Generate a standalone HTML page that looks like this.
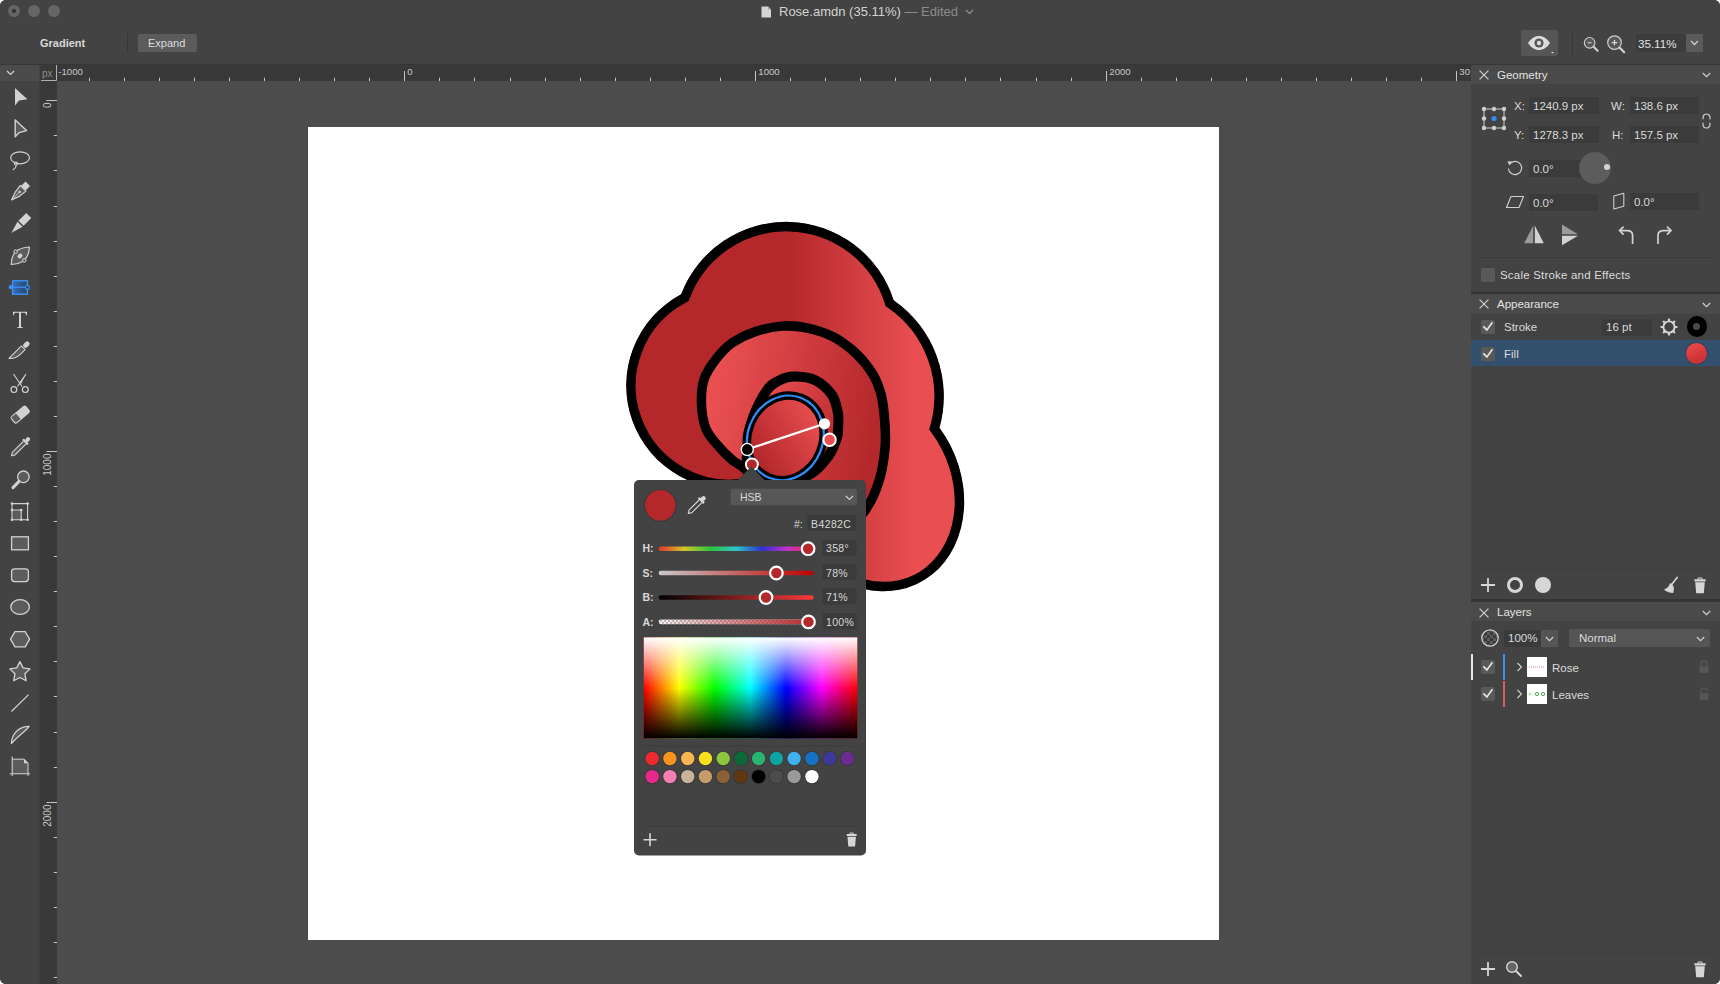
<!DOCTYPE html>
<html><head><meta charset="utf-8">
<style>
*{margin:0;padding:0;box-sizing:border-box}
html,body{width:1720px;height:984px;overflow:hidden;background:#fff}
body{font-family:"Liberation Sans",sans-serif;color:#dcdcdc;position:relative}
.a{position:absolute}
#win{position:absolute;left:0;top:0;width:1720px;height:984px;background:#434343;border-radius:6px;overflow:hidden;box-shadow:inset 0 0 0 0.6px rgba(0,0,0,0.35)}
#top{left:0;top:0;width:1720px;height:64px;background:#434343}
#topline{left:0;top:64px;width:1720px;height:1px;background:#363636;z-index:5}
.tl{width:12px;height:12px;border-radius:50%;background:#656565;top:5px}
#canvas{left:57px;top:81px;width:1414px;height:903px;background:#4c4c4c}
#hruler{left:40px;top:65px;width:1431px;height:16px;background:#393939}
#vruler{left:40px;top:81px;width:17px;height:903px;background:#393939}
#ltool{left:0;top:65px;width:40px;height:919px;background:#434343;border-right:1px solid #3b3b3b}
#ltoolhead{left:0;top:65px;width:40px;height:16px;background:#4b4b4b}
#artboard{left:308px;top:127px;width:911px;height:813px;background:#fff}
#panel{left:1471px;top:65px;width:249px;height:919px;background:#434343}
.t11{font-size:11px;line-height:13px;white-space:nowrap}
.cb{width:14px;height:14px;background:#595959;border-radius:2px}
.hdr{left:1471px;width:249px;height:19px;background:#4a4a4a}
.ht{font-size:11.5px;line-height:13px;color:#e2e2e2;white-space:nowrap}
.pt{font-size:11.5px;line-height:13px;color:#dadada;white-space:nowrap}
.fld{background:#3b3b3b}
</style></head><body>
<div id="win">
<div class="a" id="top"></div>
<div class="a" id="topline"></div>

<div class="a tl" style="left:8px"><div class="a" style="left:4px;top:4px;width:4px;height:4px;border-radius:50%;background:#2e2e2e"></div></div>
<div class="a tl" style="left:28px"></div>
<div class="a tl" style="left:48px"></div>
<svg class="a" style="left:760px;top:6px" width="13" height="12" viewBox="0 0 13 12"><path d="M1.5 0.5h6.5l3 3v8h-9.5z" fill="#d4d4d4"/><path d="M8 0.5v3h3" fill="#a8a8a8"/></svg>
<div class="a" style="left:779px;top:4px;font-size:13px;line-height:16px;color:#d2d2d2;white-space:nowrap">Rose.amdn (35.11%) <span style="color:#8c8c8c">— Edited</span></div>
<svg class="a" style="left:965px;top:9px" width="9" height="6" viewBox="0 0 9 6"><path d="M1 1l3.5 3.5L8 1" stroke="#8c8c8c" stroke-width="1.3" fill="none"/></svg>
<div class="a" style="left:40px;top:37px;font-size:11px;line-height:13px;font-weight:bold;color:#d8d8d8">Gradient</div>
<div class="a" style="left:127px;top:33px;width:1px;height:20px;background:#383838"></div>
<div class="a" style="left:138px;top:34px;width:59px;height:18px;background:#5b5b5b;border-radius:2px"></div>
<div class="a" style="left:148px;top:37px;font-size:11px;line-height:13px;color:#dcdcdc">Expand</div>
<div class="a" style="left:1521px;top:30px;width:37px;height:26px;background:#565656;border-radius:2px"></div>
<svg class="a" style="left:1526px;top:34px" width="30" height="22" viewBox="0 0 30 22"><path d="M2 9C6 3 10 2 13 2S20 3 24 9C20 15 16 16 13 16S6 15 2 9z" fill="#dcdcdc"/><circle cx="13" cy="9" r="4.6" fill="#565656"/><circle cx="13" cy="9" r="2.2" fill="#dcdcdc"/><path d="M25 18h3l-1.5 1.6z" fill="#dcdcdc"/></svg>
<div class="a" style="left:1572px;top:33px;width:1px;height:22px;background:#383838"></div>
<svg class="a" style="left:1580px;top:33px" width="22" height="22" viewBox="1580 33 22 22"><circle cx="1589.6" cy="42.8" r="5.3" fill="#595959" stroke="#cfcfcf" stroke-width="1.1"/><path d="M1587.6 42.8h4" stroke="#d8d8d8" stroke-width="1.1"/><path d="M1593.6 46.8l4 4" stroke="#cfcfcf" stroke-width="2.1" stroke-linecap="round"/></svg>
<svg class="a" style="left:1603px;top:31px" width="26" height="26" viewBox="1603 31 26 26"><circle cx="1614.5" cy="42.6" r="6.8" fill="#595959" stroke="#cfcfcf" stroke-width="1.2"/><path d="M1611.8 42.6h5.4M1614.5 39.9v5.4" stroke="#e0e0e0" stroke-width="1.2"/><path d="M1619.6 47.6l4.6 4.6" stroke="#cfcfcf" stroke-width="2.2" stroke-linecap="round"/></svg>
<div class="a" style="left:1636px;top:34px;width:50px;height:18px;background:#3c3c3c"></div>
<div class="a" style="left:1638px;top:36.5px;font-size:11.6px;line-height:13px;color:#e0e0e0">35.11%</div>
<div class="a" style="left:1686px;top:34px;width:17px;height:18px;background:#5a5a5a"></div>
<svg class="a" style="left:1690px;top:40px" width="9" height="6" viewBox="0 0 9 6"><path d="M1 1l3.5 3.5L8 1" stroke="#d0d0d0" stroke-width="1.3" fill="none"/></svg>
<div class="a" id="canvas"></div>
<div class="a" id="artboard"></div>
<svg id="rose" class="a" style="left:57px;top:81px" width="1414" height="903" viewBox="57 81 1414 903">
<defs>
<linearGradient id="gO" gradientUnits="userSpaceOnUse" x1="788" y1="300" x2="915" y2="300"><stop offset="0" stop-color="#b4282c"/><stop offset="1" stop-color="#e94f51"/></linearGradient>
<linearGradient id="gM" gradientUnits="userSpaceOnUse" x1="715" y1="400" x2="875" y2="430"><stop offset="0" stop-color="#e94f51"/><stop offset="1" stop-color="#b4282c"/></linearGradient>
<linearGradient id="gI" gradientUnits="userSpaceOnUse" x1="760" y1="385" x2="845" y2="445"><stop offset="0" stop-color="#e94f51"/><stop offset="1" stop-color="#b4282c"/></linearGradient>
<linearGradient id="gE" gradientUnits="userSpaceOnUse" x1="765" y1="465" x2="810" y2="405"><stop offset="0" stop-color="#b4282c"/><stop offset="1" stop-color="#e94f51"/></linearGradient>
<clipPath id="cO"><path d="M681.1 294.3A112.7 112.7 0 0 1 893.7 300.2A117.0 117.0 0 0 1 939.5 427.7A107.8 89.9 63.8 1 1 797.7 540.1L750.9 486.8A103.4 103.4 0 0 1 681.1 294.3Z"/></clipPath>
<clipPath id="cM"><path d="M744.2 474.9C738.2 468.0 734.3 468.0 729.3 463.7C724.3 459.4 719.0 454.4 714.4 448.8C709.8 443.2 704.3 437.6 701.4 430.2C698.5 422.8 697.0 412.9 696.7 404.2C696.4 395.5 696.9 386.2 699.5 378.1C702.1 370.0 707.6 362.3 712.6 355.8C717.6 349.3 722.8 343.8 729.3 339.1C735.8 334.5 742.9 330.8 751.6 327.9C760.3 324.9 772.1 322.2 781.4 321.4C790.7 320.6 798.4 321.4 807.4 323.3C816.4 325.2 826.6 328.1 835.3 332.6C844.0 337.1 852.7 343.9 859.5 350.2C866.3 356.5 871.9 363.6 876.3 370.7C880.6 377.8 883.4 384.9 885.6 393.0C887.8 401.1 888.6 410.4 889.3 419.1C890.0 427.8 890.5 436.4 890.0 445.0C889.5 453.6 888.1 463.2 886.5 471.0C884.9 478.8 882.6 485.6 880.3 491.7C878.0 497.8 875.5 502.7 872.5 507.6C869.5 512.5 867.4 516.4 862.0 521.0C856.6 525.6 850.3 533.5 840.0 535.0C829.7 536.5 812.5 535.0 800.0 530.0C787.5 525.0 774.3 514.2 765.0 505.0C755.7 495.8 750.2 481.8 744.2 474.9Z"/></clipPath>
<clipPath id="cI"><path d="M744.0 472.0C739.6 463.3 742.8 449.4 743.5 440.0C744.2 430.6 745.3 424.1 748.5 415.3C751.7 406.5 758.0 393.9 762.8 387.4C767.5 380.8 771.7 378.6 777.0 376.0C782.3 373.4 787.6 371.6 794.4 371.6C801.2 371.6 811.1 372.6 818.0 376.0C824.9 379.4 831.9 386.1 836.0 392.0C840.1 397.9 841.6 405.3 842.8 411.6C844.0 417.9 843.3 425.0 843.0 430.0C842.7 435.0 843.0 436.2 841.0 441.4C839.0 446.6 836.2 454.6 831.0 461.0C825.8 467.4 820.2 474.8 810.0 480.0C799.8 485.2 781.0 493.3 770.0 492.0C759.0 490.7 748.4 480.7 744.0 472.0Z"/></clipPath>
</defs>
<path d="M681.1 294.3A112.7 112.7 0 0 1 893.7 300.2A117.0 117.0 0 0 1 939.5 427.7A107.8 89.9 63.8 1 1 797.7 540.1L750.9 486.8A103.4 103.4 0 0 1 681.1 294.3Z" fill="url(#gO)" stroke="#000" stroke-width="19" clip-path="url(#cO)"/>
<path d="M744.2 474.9C738.2 468.0 734.3 468.0 729.3 463.7C724.3 459.4 719.0 454.4 714.4 448.8C709.8 443.2 704.3 437.6 701.4 430.2C698.5 422.8 697.0 412.9 696.7 404.2C696.4 395.5 696.9 386.2 699.5 378.1C702.1 370.0 707.6 362.3 712.6 355.8C717.6 349.3 722.8 343.8 729.3 339.1C735.8 334.5 742.9 330.8 751.6 327.9C760.3 324.9 772.1 322.2 781.4 321.4C790.7 320.6 798.4 321.4 807.4 323.3C816.4 325.2 826.6 328.1 835.3 332.6C844.0 337.1 852.7 343.9 859.5 350.2C866.3 356.5 871.9 363.6 876.3 370.7C880.6 377.8 883.4 384.9 885.6 393.0C887.8 401.1 888.6 410.4 889.3 419.1C890.0 427.8 890.5 436.4 890.0 445.0C889.5 453.6 888.1 463.2 886.5 471.0C884.9 478.8 882.6 485.6 880.3 491.7C878.0 497.8 875.5 502.7 872.5 507.6C869.5 512.5 867.4 516.4 862.0 521.0C856.6 525.6 850.3 533.5 840.0 535.0C829.7 536.5 812.5 535.0 800.0 530.0C787.5 525.0 774.3 514.2 765.0 505.0C755.7 495.8 750.2 481.8 744.2 474.9Z" fill="url(#gM)" stroke="#000" stroke-width="19" clip-path="url(#cM)"/>
<path d="M744.0 472.0C739.6 463.3 742.8 449.4 743.5 440.0C744.2 430.6 745.3 424.1 748.5 415.3C751.7 406.5 758.0 393.9 762.8 387.4C767.5 380.8 771.7 378.6 777.0 376.0C782.3 373.4 787.6 371.6 794.4 371.6C801.2 371.6 811.1 372.6 818.0 376.0C824.9 379.4 831.9 386.1 836.0 392.0C840.1 397.9 841.6 405.3 842.8 411.6C844.0 417.9 843.3 425.0 843.0 430.0C842.7 435.0 843.0 436.2 841.0 441.4C839.0 446.6 836.2 454.6 831.0 461.0C825.8 467.4 820.2 474.8 810.0 480.0C799.8 485.2 781.0 493.3 770.0 492.0C759.0 490.7 748.4 480.7 744.0 472.0Z" fill="url(#gI)" stroke="#000" stroke-width="20" clip-path="url(#cI)"/>
<ellipse cx="785.3" cy="437.9" rx="37.6" ry="43.0" transform="rotate(22 785.3 437.9)" fill="url(#gE)" stroke="#000" stroke-width="8.6"/>
<ellipse cx="785.3" cy="437.9" rx="37.6" ry="43.0" transform="rotate(22 785.3 437.9)" fill="none" stroke="#2f8df5" stroke-width="2.2"/>
<path d="M747.3 449.4L824.5 423.8" stroke="#fff" stroke-width="2.2"/>
<circle cx="747.3" cy="449.4" r="6" fill="#000" stroke="#fff" stroke-width="1.4"/>
<circle cx="824.5" cy="423.8" r="5.6" fill="#fff"/>
<circle cx="829.6" cy="439.8" r="6.2" fill="#e94f51" stroke="#fff" stroke-width="2"/>
<circle cx="751.9" cy="464.5" r="6" fill="#b4282c" stroke="#fff" stroke-width="2"/>
</svg>
<svg id="pop" class="a" style="left:620px;top:460px" width="260" height="410" viewBox="620 460 260 410">
<defs>
<linearGradient id="hue" x1="0" y1="0" x2="1" y2="0"><stop offset="0" stop-color="#f00"/><stop offset="0.1667" stop-color="#ff0"/><stop offset="0.3333" stop-color="#0f0"/><stop offset="0.5" stop-color="#0ff"/><stop offset="0.6667" stop-color="#00f"/><stop offset="0.8333" stop-color="#f0f"/><stop offset="1" stop-color="#f00"/></linearGradient>
<linearGradient id="wb" x1="0" y1="0" x2="0" y2="1"><stop offset="0" stop-color="#fff" stop-opacity="1"/><stop offset="0.5" stop-color="#fff" stop-opacity="0"/><stop offset="0.5" stop-color="#000" stop-opacity="0"/><stop offset="1" stop-color="#000" stop-opacity="1"/></linearGradient>
<linearGradient id="hueS" x1="0" y1="0" x2="1" y2="0"><stop offset="0" stop-color="#e3332e"/><stop offset="0.1667" stop-color="#d4c62c"/><stop offset="0.3333" stop-color="#2fc33a"/><stop offset="0.5" stop-color="#2cc6c9"/><stop offset="0.6667" stop-color="#3030d0"/><stop offset="0.8333" stop-color="#c52fc9"/><stop offset="1" stop-color="#e3332e"/></linearGradient>
<linearGradient id="satS" x1="0" y1="0" x2="1" y2="0"><stop offset="0" stop-color="#c9c9c9"/><stop offset="1" stop-color="#c00000"/></linearGradient>
<linearGradient id="briS" x1="0" y1="0" x2="1" y2="0"><stop offset="0" stop-color="#000"/><stop offset="1" stop-color="#ff3a3a"/></linearGradient>
<linearGradient id="alS" x1="0" y1="0" x2="1" y2="0"><stop offset="0" stop-color="#b4282c" stop-opacity="0"/><stop offset="1" stop-color="#b4282c" stop-opacity="1"/></linearGradient>
<pattern id="chkA" width="4" height="4" patternUnits="userSpaceOnUse" x="0" y="619.8"><rect width="4" height="4" fill="#fff"/><rect width="2" height="2" fill="#b8b8b8"/><rect x="2" y="2" width="2" height="2" fill="#b8b8b8"/></pattern>
</defs>
<path d="M737.5 480.5L751.3 466.2L765 480.5Z" fill="#434343"/>
<rect x="634" y="480" width="232" height="375.5" rx="5" fill="#434343"/>
<circle cx="660.3" cy="505.4" r="16.3" fill="#383838"/><circle cx="660.3" cy="505.4" r="15.3" fill="#b4282c"/>
<g transform="translate(696.5 505.3) rotate(45)"><rect x="-2.2" y="-12.2" width="4.4" height="5" rx="2.2" fill="#d8d8d8"/><rect x="-3.8" y="-8" width="7.6" height="2.4" rx="0.8" fill="#d8d8d8"/><path d="M-1.9 -5.6V8.5L0 11.6L1.9 8.5V-5.6" fill="#434343" stroke="#d8d8d8" stroke-width="1.1" stroke-linejoin="round"/></g>
<rect x="730.5" y="488.7" width="126.4" height="16.6" rx="1.5" fill="#575757"/>
<text x="740" y="501" font-family="Liberation Sans" font-size="10.5" fill="#d8d8d8">HSB</text>
<path d="M845.8 496L849.4 499.4L853 496" stroke="#d0d0d0" stroke-width="1.2" fill="none"/>
<text x="794" y="528" font-family="Liberation Sans" font-size="10.5" fill="#d8d8d8">#:</text>
<rect x="807.2" y="514.9" width="48.8" height="16.1" fill="#3b3b3b"/>
<text x="811" y="528" font-family="Liberation Sans" font-size="10.5" fill="#d8d8d8" letter-spacing="0.4">B4282C</text>
<text x="642.5" y="552.4" font-family="Liberation Sans" font-size="10.5" fill="#d8d8d8" font-weight="bold" fill="#cfcfcf">H:</text>
<rect x="658.6" y="546.5" width="155" height="4.4" rx="2.2" fill="url(#hueS)"/>
<circle cx="808.1" cy="548.7" r="6.3" fill="#b4282c" stroke="#fff" stroke-width="2.2"/>
<rect x="822.7" y="540.2" width="33.8" height="16" fill="#3b3b3b"/>
<text x="826" y="552.4" font-family="Liberation Sans" font-size="10.5" fill="#d8d8d8" letter-spacing="0.3">358°</text>
<text x="642.5" y="576.7" font-family="Liberation Sans" font-size="10.5" fill="#d8d8d8" font-weight="bold" fill="#cfcfcf">S:</text>
<rect x="658.6" y="570.8" width="155" height="4.4" rx="2.2" fill="url(#satS)"/>
<circle cx="776.4" cy="573" r="6.3" fill="#b4282c" stroke="#fff" stroke-width="2.2"/>
<rect x="822.7" y="563.7" width="33.8" height="16" fill="#3b3b3b"/>
<text x="826" y="576.7" font-family="Liberation Sans" font-size="10.5" fill="#d8d8d8" letter-spacing="0.3">78%</text>
<text x="642.5" y="601.2" font-family="Liberation Sans" font-size="10.5" fill="#d8d8d8" font-weight="bold" fill="#cfcfcf">B:</text>
<rect x="658.6" y="595.3" width="155" height="4.4" rx="2.2" fill="url(#briS)"/>
<circle cx="766" cy="597.5" r="6.3" fill="#b4282c" stroke="#fff" stroke-width="2.2"/>
<rect x="822.7" y="588.4" width="33.8" height="16" fill="#3b3b3b"/>
<text x="826" y="601.2" font-family="Liberation Sans" font-size="10.5" fill="#d8d8d8" letter-spacing="0.3">71%</text>
<text x="642.5" y="625.6" font-family="Liberation Sans" font-size="10.5" fill="#d8d8d8" font-weight="bold" fill="#cfcfcf">A:</text>
<rect x="658.6" y="619.5" width="155" height="4.8" rx="2.4" fill="url(#chkA)"/>
<rect x="658.6" y="619.5" width="155" height="4.8" rx="2.4" fill="url(#alS)"/>
<circle cx="808.5" cy="621.9" r="6.3" fill="#b4282c" stroke="#fff" stroke-width="2.2"/>
<rect x="822.7" y="613.2" width="33.8" height="16" fill="#3b3b3b"/>
<text x="826" y="625.6" font-family="Liberation Sans" font-size="10.5" fill="#d8d8d8" letter-spacing="0.3">100%</text>
<rect x="643.8" y="637.4" width="213.5" height="100.9" fill="url(#hue)"/>
<rect x="643.8" y="637.4" width="213.5" height="100.9" fill="url(#wb)"/>
<rect x="643" y="745.3" width="214" height="1" fill="#3d3d3d"/>
<circle cx="652.2" cy="758.5" r="7.6" fill="#383838"/><circle cx="652.2" cy="758.5" r="6.7" fill="#ee2a2f"/>
<circle cx="669.9" cy="758.5" r="7.6" fill="#383838"/><circle cx="669.9" cy="758.5" r="6.7" fill="#f7931f"/>
<circle cx="687.7" cy="758.5" r="7.6" fill="#383838"/><circle cx="687.7" cy="758.5" r="6.7" fill="#f9b552"/>
<circle cx="705.4" cy="758.5" r="7.6" fill="#383838"/><circle cx="705.4" cy="758.5" r="6.7" fill="#f8e11c"/>
<circle cx="723.2" cy="758.5" r="7.6" fill="#383838"/><circle cx="723.2" cy="758.5" r="6.7" fill="#8dc63f"/>
<circle cx="740.9" cy="758.5" r="7.6" fill="#383838"/><circle cx="740.9" cy="758.5" r="6.7" fill="#0b6a38"/>
<circle cx="758.6" cy="758.5" r="7.6" fill="#383838"/><circle cx="758.6" cy="758.5" r="6.7" fill="#28b473"/>
<circle cx="776.4" cy="758.5" r="7.6" fill="#383838"/><circle cx="776.4" cy="758.5" r="6.7" fill="#0ea4a2"/>
<circle cx="794.1" cy="758.5" r="7.6" fill="#383838"/><circle cx="794.1" cy="758.5" r="6.7" fill="#40b1ef"/>
<circle cx="811.9" cy="758.5" r="7.6" fill="#383838"/><circle cx="811.9" cy="758.5" r="6.7" fill="#1573c6"/>
<circle cx="829.6" cy="758.5" r="7.6" fill="#383838"/><circle cx="829.6" cy="758.5" r="6.7" fill="#3b3a9a"/>
<circle cx="847.3" cy="758.5" r="7.6" fill="#383838"/><circle cx="847.3" cy="758.5" r="6.7" fill="#6a2c90"/>
<circle cx="652.2" cy="776.6" r="7.6" fill="#383838"/><circle cx="652.2" cy="776.6" r="6.7" fill="#e7298c"/>
<circle cx="669.9" cy="776.6" r="7.6" fill="#383838"/><circle cx="669.9" cy="776.6" r="6.7" fill="#f37fb3"/>
<circle cx="687.7" cy="776.6" r="7.6" fill="#383838"/><circle cx="687.7" cy="776.6" r="6.7" fill="#c8b39a"/>
<circle cx="705.4" cy="776.6" r="7.6" fill="#383838"/><circle cx="705.4" cy="776.6" r="6.7" fill="#c69c6c"/>
<circle cx="723.2" cy="776.6" r="7.6" fill="#383838"/><circle cx="723.2" cy="776.6" r="6.7" fill="#8b6138"/>
<circle cx="740.9" cy="776.6" r="7.6" fill="#383838"/><circle cx="740.9" cy="776.6" r="6.7" fill="#5f3813"/>
<circle cx="758.6" cy="776.6" r="7.6" fill="#383838"/><circle cx="758.6" cy="776.6" r="6.7" fill="#000000"/>
<circle cx="776.4" cy="776.6" r="7.6" fill="#383838"/><circle cx="776.4" cy="776.6" r="6.7" fill="#4c4c4c"/>
<circle cx="794.1" cy="776.6" r="7.6" fill="#383838"/><circle cx="794.1" cy="776.6" r="6.7" fill="#9a9a9a"/>
<circle cx="811.9" cy="776.6" r="7.6" fill="#383838"/><circle cx="811.9" cy="776.6" r="6.7" fill="#ffffff"/>
<rect x="643" y="825.5" width="214" height="1" fill="#3d3d3d"/>
<path d="M650 833.2V846.2M643.5 839.7H656.5" stroke="#d6d6d6" stroke-width="1.6"/>
<g transform="translate(846.3 832.2)"><path d="M3.6 1.8V0.8H7V1.8" stroke="#d6d6d6" stroke-width="0.9" fill="none"/><rect x="0.4" y="1.8" width="10" height="2" rx="0.5" fill="#d6d6d6"/><path d="M1.2 4.6H9.6L8.8 14.2H2Z" fill="#d6d6d6"/></g>
</svg>
<svg id="hr" class="a" style="left:40px;top:64px" width="1431" height="17" viewBox="0 0 1431 17">
<rect x="0" y="0" width="1431" height="17" fill="#393939"/>
<path d="M49.5 13.7V17 M84.5 13.7V17 M119.5 13.7V17 M154.5 13.7V17 M189.5 13.7V17 M224.5 13.7V17 M259.5 13.7V17 M294.5 13.7V17 M329.5 13.7V17 M364.5 7V17 M399.5 13.7V17 M434.5 13.7V17 M470.5 13.7V17 M505.5 13.7V17 M540.5 13.7V17 M575.5 13.7V17 M610.5 13.7V17 M645.5 13.7V17 M680.5 13.7V17 M715.5 7V17 M750.5 13.7V17 M785.5 13.7V17 M820.5 13.7V17 M855.5 13.7V17 M890.5 13.7V17 M925.5 13.7V17 M960.5 13.7V17 M996.5 13.7V17 M1031.5 13.7V17 M1066.5 7V17 M1101.5 13.7V17 M1136.5 13.7V17 M1171.5 13.7V17 M1206.5 13.7V17 M1241.5 13.7V17 M1276.5 13.7V17 M1311.5 13.7V17 M1346.5 13.7V17 M1381.5 13.7V17 M1416.5 7V17" stroke="#c4c4c4" stroke-width="1"/>
<text x="18.3" y="11.1" font-family="Liberation Sans" font-size="9.6" fill="#c8c8c8">-1000</text>
<text x="367.3" y="11.1" font-family="Liberation Sans" font-size="9.6" fill="#c8c8c8">0</text>
<text x="718.3" y="11.1" font-family="Liberation Sans" font-size="9.6" fill="#c8c8c8">1000</text>
<text x="1069.3" y="11.1" font-family="Liberation Sans" font-size="9.6" fill="#c8c8c8">2000</text>
<text x="1419.3" y="11.1" font-family="Liberation Sans" font-size="9.6" fill="#c8c8c8">30</text>
<rect x="0" y="0" width="17" height="17" fill="#393939"/>
<text x="2" y="12.5" font-family="Liberation Sans" font-size="10" fill="#8a8a8a">px</text>
<path d="M1 16.5H16.5V0" stroke="#b0b0b0" stroke-width="1" fill="none"/>
</svg>
<svg id="vr" class="a" style="left:40px;top:81px" width="17" height="903" viewBox="0 0 17 903">
<rect x="0" y="0" width="17" height="903" fill="#393939"/>
<path d="M6.5 19.5H17 M13.7 54.5H17 M13.7 89.5H17 M13.7 125.5H17 M13.7 160.5H17 M13.7 195.5H17 M13.7 230.5H17 M13.7 265.5H17 M13.7 300.5H17 M13.7 335.5H17 M6.5 370.5H17 M13.7 405.5H17 M13.7 440.5H17 M13.7 475.5H17 M13.7 510.5H17 M13.7 545.5H17 M13.7 580.5H17 M13.7 615.5H17 M13.7 651.5H17 M13.7 686.5H17 M6.5 721.5H17 M13.7 756.5H17 M13.7 791.5H17 M13.7 826.5H17 M13.7 861.5H17 M13.7 896.5H17" stroke="#c4c4c4" stroke-width="1"/>
<text transform="translate(11 21.5) rotate(-90)" font-family="Liberation Sans" font-size="10" fill="#c8c8c8" text-anchor="end">0</text>
<text transform="translate(11 372.5) rotate(-90)" font-family="Liberation Sans" font-size="10" fill="#c8c8c8" text-anchor="end">1000</text>
<text transform="translate(11 723.5) rotate(-90)" font-family="Liberation Sans" font-size="10" fill="#c8c8c8" text-anchor="end">2000</text>
</svg>
<svg class="a" style="left:0;top:64px" width="40" height="920" viewBox="0 64 40 920">
<rect x="0" y="64" width="40" height="920" fill="#434343"/>
<rect x="0" y="65" width="40" height="16" fill="#4b4b4b"/>
<rect x="39.5" y="64" width="1" height="920" fill="#3a3a3a"/>
<path d="M7 71l3.5 3.5L14 71" stroke="#d2d2d2" stroke-width="1.2" fill="none"/>
<!-- select -->
<path d="M15 88L27.4 99.2L19 100.6L15 105.4Z" fill="#d2d2d2"/>
<!-- direct select -->
<path d="M15.2 120L26.6 130.6L19.2 132.6L15.2 136.8Z" fill="#5c5c5c" stroke="#d2d2d2" stroke-width="1.4" stroke-linejoin="round"/>
<!-- lasso -->
<ellipse cx="20.1" cy="157.8" rx="9.4" ry="6" fill="none" stroke="#d2d2d2" stroke-width="1.2"/>
<circle cx="16" cy="163.6" r="1.6" fill="none" stroke="#d2d2d2" stroke-width="1.1"/>
<path d="M16.3 165.2C16 167.5 14.5 169 12.8 169.8" stroke="#d2d2d2" stroke-width="1.1" fill="none"/>
<!-- pen -->
<g transform="translate(20 191.5) rotate(45)">
<rect x="-3.2" y="-11" width="6.4" height="6" fill="#d2d2d2"/>
<path d="M-4 -4.5H4L3 3.5L0 12L-3 3.5Z" fill="#5c5c5c" stroke="#d2d2d2" stroke-width="1.2" stroke-linejoin="round"/>
<path d="M0 12V1" stroke="#d2d2d2" stroke-width="0.9"/><circle cx="0" cy="0.5" r="1.3" fill="#d2d2d2"/>
</g>
<!-- pencil -->
<g transform="translate(20.3 224) rotate(45)">
<rect x="-3.6" y="-12" width="7.2" height="11" fill="#d2d2d2"/>
<path d="M-3.6 0.4H3.6L0.6 10.5H-0.6Z" fill="#d2d2d2"/>
<path d="M-0.7 10.5L0 12.5L0.7 10.5" fill="#d2d2d2"/>
</g>
<!-- shaper -->
<path d="M11.2 264.5C11.5 259 13 254 15.6 251.6C19.5 248.5 24 247.3 29.5 247C29.2 252.5 27.5 257 24.2 260.4C21 263 16.5 264.3 11.2 264.5Z" fill="#5c5c5c" stroke="#d2d2d2" stroke-width="1.2" stroke-linejoin="round"/>
<ellipse cx="20" cy="256" rx="2.6" ry="2" fill="#d2d2d2" transform="rotate(-45 20 256)"/>
<circle cx="15.6" cy="251.6" r="1.8" fill="#5c5c5c" stroke="#d2d2d2" stroke-width="1"/>
<circle cx="24.2" cy="260.4" r="1.8" fill="#5c5c5c" stroke="#d2d2d2" stroke-width="1"/>
<!-- gradient tool -->
<defs><linearGradient id="gt" x1="0" y1="0" x2="1" y2="0"><stop offset="0" stop-color="#2f6fc0"/><stop offset="1" stop-color="#2c4565"/></linearGradient></defs>
<rect x="12.6" y="280.8" width="14.8" height="13.4" fill="url(#gt)" stroke="#3c92f4" stroke-width="1.4"/>
<path d="M10.5 287.2H25.2" stroke="#3c92f4" stroke-width="1.2"/>
<circle cx="10.8" cy="287.2" r="2.1" fill="#3c92f4"/>
<circle cx="27.4" cy="287.2" r="2" fill="#2c4565" stroke="#3c92f4" stroke-width="1.1"/>
<!-- T -->
<path d="M13 311.7H27V315.2H26.2C25.8 313.3 25.3 312.8 23.5 312.8H21V326.3C21 327 21.5 327.3 23 327.4V328.1H17V327.4C18.5 327.3 19 327 19 326.3V312.8H16.5C14.7 312.8 14.2 313.3 13.8 315.2H13Z" fill="#d2d2d2"/>
<!-- knife -->
<g transform="translate(20 351) rotate(45)">
<rect x="-2.4" y="-12.5" width="4.8" height="7" rx="2.2" fill="#d2d2d2"/>
<path d="M-2.6 -4.6H2.6V1C2.6 6 1 10 -2.6 13Z" fill="#5c5c5c" stroke="#d2d2d2" stroke-width="1.1" stroke-linejoin="round"/>
</g>
<!-- scissors -->
<path d="M13.5 374L22 386.5M26 374L17.5 386.5" stroke="#d2d2d2" stroke-width="1.1"/>
<path d="M26 374L19.5 382.5L21 384Z" fill="#d2d2d2"/>
<circle cx="13.9" cy="389.6" r="2.9" fill="none" stroke="#d2d2d2" stroke-width="1.2"/>
<circle cx="25.3" cy="389.6" r="2.9" fill="none" stroke="#d2d2d2" stroke-width="1.2"/>
<!-- eraser -->
<g transform="translate(20.2 414.6) rotate(-40)">
<rect x="-10" y="-4.6" width="20" height="9.2" rx="2.4" fill="#d2d2d2"/>
<path d="M-8.8 -3.6H-2.5V3.6H-7.4C-8.4 3.6 -8.8 3 -8.8 2Z" fill="#5c5c5c"/>
</g>
<!-- eyedropper -->
<g transform="translate(20.3 447) rotate(45)">
<rect x="-2" y="-13" width="4" height="5" rx="2" fill="#d2d2d2"/>
<rect x="-3.6" y="-8.5" width="7.2" height="2.4" rx="0.8" fill="#d2d2d2"/>
<path d="M-1.8 -6V9.5L0 12.5L1.8 9.5V-6" fill="#5c5c5c" stroke="#d2d2d2" stroke-width="1.1" stroke-linejoin="round"/>
</g>
<!-- zoom -->
<circle cx="23.4" cy="476.8" r="5.8" fill="#5c5c5c" stroke="#d2d2d2" stroke-width="1.3"/>
<path d="M19 481.4L13 487.6" stroke="#d2d2d2" stroke-width="3" stroke-linecap="round"/>
<!-- artboard -->
<rect x="12.2" y="510.2" width="9" height="9.6" fill="#5c5c5c"/>
<path d="M12 503.6H27.6V519.8H12ZM12 510H21.2V519.8" fill="none" stroke="#d2d2d2" stroke-width="1.1"/>
<g fill="#d2d2d2"><circle cx="12" cy="503.6" r="1.3"/><circle cx="27.6" cy="503.6" r="1.3"/><circle cx="12" cy="519.8" r="1.3"/><circle cx="27.6" cy="519.8" r="1.3"/><circle cx="12" cy="510" r="1.3"/><circle cx="21.2" cy="510" r="1.3"/><circle cx="21.2" cy="519.8" r="1.3"/></g>
<!-- rect -->
<rect x="11.6" y="536.8" width="16.8" height="13" fill="#5c5c5c" stroke="#d2d2d2" stroke-width="1.3"/>
<!-- rounded rect -->
<rect x="11.6" y="568.8" width="16.8" height="12.8" rx="3" fill="#5c5c5c" stroke="#d2d2d2" stroke-width="1.3"/>
<!-- ellipse -->
<ellipse cx="20.1" cy="607" rx="9.3" ry="7.4" fill="#5c5c5c" stroke="#d2d2d2" stroke-width="1.3"/>
<!-- hexagon -->
<path d="M10.5 639.2L15 631.6H25.2L29.6 639.2L25.2 646.8H15Z" fill="#5c5c5c" stroke="#d2d2d2" stroke-width="1.3" stroke-linejoin="round"/>
<!-- star -->
<path d="M19.9 661.6L23.0 667.9L30.0 668.9L24.9 673.8L26.1 680.8L19.9 677.5L13.7 680.8L14.9 673.8L9.8 668.9L16.8 667.9Z" fill="#5c5c5c" stroke="#d2d2d2" stroke-width="1.3" stroke-linejoin="round"/>
<!-- line -->
<path d="M11.4 711.5L28.6 694.6" stroke="#d2d2d2" stroke-width="1.2"/>
<!-- arc -->
<path d="M11.4 743.6C11.5 733.5 19 726.5 29.2 726.4C26 731 19 735 11.4 743.6Z" fill="#5c5c5c" stroke="#d2d2d2" stroke-width="1.1" stroke-linejoin="round"/>
<!-- page/crop -->
<path d="M12.3 759.2H24.5L28 762.7V773.7H12.3Z" fill="#5c5c5c"/>
<path d="M24 759.2L28 763.2H24Z" fill="#d2d2d2"/>
<path d="M12.2 756.6V776M9.8 773.7H30" stroke="#d2d2d2" stroke-width="1.1"/>
<path d="M12.2 759.2H24.3L28 762.9V776" stroke="#d2d2d2" stroke-width="1" fill="none"/>
</svg>
<div class="a" style="left:1471px;top:64px;width:249px;height:920px;background:#434343"></div>
<div class="a" style="left:1471px;top:64px;width:249px;height:1px;background:#363636"></div>
<div class="a hdr" style="top:65px"></div>
<svg class="a" style="left:1478.5px;top:70px" width="10" height="10" viewBox="0 0 10 10"><path d="M0.6 0.6L9.4 9.4M9.4 0.6L0.6 9.4" stroke="#cfcfcf" stroke-width="1.2"/></svg>
<div class="a ht" style="left:1497px;top:69px">Geometry</div>
<svg class="a" style="left:1702px;top:72px" width="9" height="6" viewBox="0 0 9 6"><path d="M0.8 1L4.5 4.6L8.2 1" stroke="#cfcfcf" stroke-width="1.2" fill="none"/></svg>
<svg class="a" style="left:1480.5px;top:105.5px" width="28" height="28" viewBox="0 0 28 28"><rect x="3" y="3" width="20" height="19" fill="none" stroke="#cfcfcf" stroke-width="1"/>
<g fill="#cfcfcf"><circle cx="3" cy="3" r="2.2"/><circle cx="13" cy="3" r="2.2"/><circle cx="23" cy="3" r="2.2"/><circle cx="3" cy="12.5" r="2.2"/><circle cx="23" cy="12.5" r="2.2"/><circle cx="3" cy="22" r="2.2"/><circle cx="13" cy="22" r="2.2"/><circle cx="23" cy="22" r="2.2"/></g><circle cx="13" cy="12.5" r="2.6" fill="#2f8df5"/></svg>
<div class="a pt" style="left:1514px;top:100px">X:</div>
<div class="a pt" style="left:1514px;top:129px">Y:</div>
<div class="a pt" style="left:1611px;top:100px">W:</div>
<div class="a pt" style="left:1612px;top:129px">H:</div>
<div class="a fld" style="left:1529px;top:97px;width:70px;height:17px"></div><div class="a pt" style="left:1533px;top:100px">1240.9 px</div>
<div class="a fld" style="left:1529px;top:126px;width:70px;height:17px"></div><div class="a pt" style="left:1533px;top:129px">1278.3 px</div>
<div class="a fld" style="left:1630px;top:97px;width:69px;height:17px"></div><div class="a pt" style="left:1634px;top:100px">138.6 px</div>
<div class="a fld" style="left:1630px;top:126px;width:69px;height:17px"></div><div class="a pt" style="left:1634px;top:129px">157.5 px</div>
<svg class="a" style="left:1701px;top:113px" width="11" height="16" viewBox="0 0 11 16"><path d="M2 6.2V4.5a3.5 3.5 0 0 1 7 0v1.7M2 9.8v1.7a3.5 3.5 0 0 0 7 0V9.8" stroke="#cfcfcf" stroke-width="1.2" fill="none"/></svg>
<svg class="a" style="left:1506px;top:159px" width="18" height="18" viewBox="0 0 18 18"><path d="M3.6 5.2A6.6 6.6 0 1 1 2.4 9.5" stroke="#cfcfcf" stroke-width="1.2" fill="none"/><path d="M1.6 2.2L5.8 2.6L3.2 6.4Z" fill="#cfcfcf"/></svg>
<div class="a fld" style="left:1529px;top:160px;width:60px;height:17px"></div><div class="a pt" style="left:1533px;top:163px">0.0°</div>
<div class="a" style="left:1579px;top:152px;width:32px;height:32px;border-radius:50%;background:#5c5c5c"></div>
<div class="a" style="left:1603.5px;top:164px;width:6px;height:6px;border-radius:50%;background:#d4d4d4"></div>
<svg class="a" style="left:1505px;top:195px" width="20" height="14" viewBox="0 0 20 14"><path d="M6 1.5H18.5L14 12.5H1.5Z" stroke="#cfcfcf" stroke-width="1.1" fill="none" stroke-linejoin="round"/></svg>
<div class="a fld" style="left:1529px;top:194px;width:69px;height:17px"></div><div class="a pt" style="left:1533px;top:197px">0.0°</div>
<svg class="a" style="left:1612px;top:192px" width="14" height="18" viewBox="0 0 14 18"><path d="M1.8 4V17L11.8 14.2V1.2Z" stroke="#cfcfcf" stroke-width="1.1" fill="none" stroke-linejoin="round"/></svg>
<div class="a fld" style="left:1630px;top:193px;width:69px;height:17px"></div><div class="a pt" style="left:1634px;top:196px">0.0°</div>
<svg class="a" style="left:1522px;top:223px" width="24" height="24" viewBox="0 0 24 24"><path d="M11.2 2.5V20.3H2.2Z" fill="#9a9a9a"/><path d="M12.8 2.5V20.3H21.8Z" fill="#d2d2d2"/></svg>
<svg class="a" style="left:1558px;top:223px" width="24" height="24" viewBox="0 0 24 24"><path d="M4 1.6L20 11.2H4Z" fill="#9a9a9a"/><path d="M4 12.8H20L4 22.2Z" fill="#d2d2d2"/></svg>
<svg class="a" style="left:1617px;top:224px" width="22" height="22" viewBox="0 0 22 22"><path d="M15.6 20V11.5C15.6 8 13.5 6.6 10 6.6H3" stroke="#d2d2d2" stroke-width="1.7" fill="none"/><path d="M6.6 2.6L2.6 6.6L6.6 10.6" stroke="#d2d2d2" stroke-width="1.7" fill="none"/></svg>
<svg class="a" style="left:1653px;top:224px" width="22" height="22" viewBox="0 0 22 22"><path d="M5 20V11.5C5 8 7.1 6.6 10.6 6.6H17.6" stroke="#d2d2d2" stroke-width="1.7" fill="none"/><path d="M14 2.6L18 6.6L14 10.6" stroke="#d2d2d2" stroke-width="1.7" fill="none"/></svg>
<div class="a" style="left:1481px;top:257px;width:230px;height:1px;background:#3b3b3b"></div>
<div class="a" style="left:1481px;top:268px;width:14px;height:14px;background:#595959;border-radius:2px"></div>
<div class="a pt" style="left:1500px;top:269px;letter-spacing:0.2px">Scale Stroke and Effects</div>
<div class="a" style="left:1471px;top:292px;width:249px;height:2px;background:#353535"></div>
<div class="a hdr" style="top:294px;height:20px"></div>
<svg class="a" style="left:1478.5px;top:298.5px" width="10" height="10" viewBox="0 0 10 10"><path d="M0.6 0.6L9.4 9.4M9.4 0.6L0.6 9.4" stroke="#cfcfcf" stroke-width="1.2"/></svg>
<div class="a ht" style="left:1497px;top:298px">Appearance</div>
<svg class="a" style="left:1702px;top:302px" width="9" height="6" viewBox="0 0 9 6"><path d="M0.8 1L4.5 4.6L8.2 1" stroke="#cfcfcf" stroke-width="1.2" fill="none"/></svg>
<div class="a" style="left:1471px;top:314px;width:249px;height:26.5px;background:#424242"></div>
<div class="a cb" style="left:1481px;top:320px"><svg width="14" height="14" viewBox="0 0 14 14"><path d="M2.3 6.4L5.9 9.9L11.4 2.3" stroke="#e2e2e2" stroke-width="1.7" fill="none"/></svg></div>
<div class="a pt" style="left:1504px;top:321px">Stroke</div>
<div class="a fld" style="left:1602px;top:319px;width:50px;height:17px"></div><div class="a pt" style="left:1606px;top:321px">16 pt</div>
<svg class="a" style="left:1659px;top:316.8px" width="20" height="20" viewBox="0 0 20 20"><circle cx="10" cy="10" r="5.6" fill="none" stroke="#d6d6d6" stroke-width="1.9"/><g fill="#d6d6d6"><rect x="8.9" y="1.6" width="2.2" height="3.4" rx="0.4" transform="rotate(0 10 10)"/><rect x="8.9" y="1.6" width="2.2" height="3.4" rx="0.4" transform="rotate(45 10 10)"/><rect x="8.9" y="1.6" width="2.2" height="3.4" rx="0.4" transform="rotate(90 10 10)"/><rect x="8.9" y="1.6" width="2.2" height="3.4" rx="0.4" transform="rotate(135 10 10)"/><rect x="8.9" y="1.6" width="2.2" height="3.4" rx="0.4" transform="rotate(180 10 10)"/><rect x="8.9" y="1.6" width="2.2" height="3.4" rx="0.4" transform="rotate(225 10 10)"/><rect x="8.9" y="1.6" width="2.2" height="3.4" rx="0.4" transform="rotate(270 10 10)"/><rect x="8.9" y="1.6" width="2.2" height="3.4" rx="0.4" transform="rotate(315 10 10)"/></g></svg>
<div class="a" style="left:1686.5px;top:316.2px;width:20.4px;height:20.4px;border-radius:50%;background:#000"></div>
<div class="a" style="left:1693px;top:322.7px;width:7.4px;height:7.4px;border-radius:50%;background:#4a4a4a"></div>
<div class="a" style="left:1471px;top:340px;width:249px;height:26px;background:#34506f"></div>
<div class="a cb" style="left:1481px;top:347px"><svg width="14" height="14" viewBox="0 0 14 14"><path d="M2.3 6.4L5.9 9.9L11.4 2.3" stroke="#e2e2e2" stroke-width="1.7" fill="none"/></svg></div>
<div class="a pt" style="left:1504px;top:348px">Fill</div>
<div class="a" style="left:1686px;top:343px;width:21px;height:21px;border-radius:50%;box-shadow:0 0 0 0.7px #2a3a4a;background:linear-gradient(160deg,#ee4d4d,#d43638 60%,#c23034)"></div>
<div class="a" style="left:1481px;top:569px;width:230px;height:1px;background:#3e3e3e"></div>
<svg class="a" style="left:1480px;top:577px" width="16" height="16" viewBox="0 0 16 16"><path d="M8 1V15M1 8H15" stroke="#d6d6d6" stroke-width="1.8"/></svg>
<div class="a" style="left:1507px;top:577px;width:16.4px;height:16.4px;border-radius:50%;border:3.4px solid #d6d6d6"></div>
<div class="a" style="left:1535px;top:577px;width:16px;height:16px;border-radius:50%;background:#d6d6d6"></div>
<svg class="a" style="left:1662px;top:576px" width="18" height="18" viewBox="0 0 18 18"><path d="M9.6 8.6L15.2 1.4" stroke="#d6d6d6" stroke-width="1.6" stroke-linecap="round"/><path d="M8 7.2C11.6 8.6 12.8 11.5 11.2 17C7.6 16.6 4.2 15.5 2 13.4C5 12.6 7 10.6 8 7.2Z" fill="#d6d6d6"/></svg>
<svg class="a" style="left:1694px;top:577px" width="12" height="17" viewBox="0 0 12 17"><path d="M4 2.2V1H8V2.2" stroke="#d6d6d6" stroke-width="1" fill="none"/><rect x="0.3" y="2.2" width="11.4" height="2.2" rx="0.6" fill="#d6d6d6"/><path d="M1.2 5.3H10.8L9.8 16.2H2.2Z" fill="#d6d6d6"/></svg>
<div class="a" style="left:1471px;top:599px;width:249px;height:3px;background:#353535"></div>
<div class="a hdr" style="top:602px"></div>
<svg class="a" style="left:1478.5px;top:607.5px" width="10" height="10" viewBox="0 0 10 10"><path d="M0.6 0.6L9.4 9.4M9.4 0.6L0.6 9.4" stroke="#cfcfcf" stroke-width="1.2"/></svg>
<div class="a ht" style="left:1497px;top:606px">Layers</div>
<svg class="a" style="left:1702px;top:610px" width="9" height="6" viewBox="0 0 9 6"><path d="M0.8 1L4.5 4.6L8.2 1" stroke="#cfcfcf" stroke-width="1.2" fill="none"/></svg>
<svg class="a" style="left:1480px;top:628px" width="20" height="20" viewBox="0 0 20 20"><defs><pattern id="chk" width="6" height="6" patternUnits="userSpaceOnUse" x="1" y="1"><rect width="6" height="6" fill="#5a5a5a"/><rect width="3" height="3" fill="#3a3a3a"/><rect x="3" y="3" width="3" height="3" fill="#3a3a3a"/></pattern></defs><circle cx="10" cy="10" r="8.2" fill="url(#chk)" stroke="#cfcfcf" stroke-width="1.3"/></svg>
<div class="a fld" style="left:1504px;top:630px;width:37px;height:17px"></div><div class="a pt" style="left:1508px;top:632px">100%</div>
<div class="a" style="left:1541px;top:630px;width:17px;height:17px;background:#555"></div>
<svg class="a" style="left:1545px;top:636px" width="9" height="6" viewBox="0 0 9 6"><path d="M0.8 1L4.5 4.6L8.2 1" stroke="#cfcfcf" stroke-width="1.2" fill="none"/></svg>
<div class="a" style="left:1569px;top:629px;width:141px;height:18px;background:#555;border-radius:2px"></div>
<div class="a pt" style="left:1579px;top:632px">Normal</div>
<svg class="a" style="left:1696px;top:636px" width="9" height="6" viewBox="0 0 9 6"><path d="M0.8 1L4.5 4.6L8.2 1" stroke="#cfcfcf" stroke-width="1.2" fill="none"/></svg>
<div class="a" style="left:1471px;top:654px;width:2px;height:26px;background:#e6e6e6"></div>
<div class="a cb" style="left:1481px;top:660px"><svg width="14" height="14" viewBox="0 0 14 14"><path d="M2.3 6.4L5.9 9.9L11.4 2.3" stroke="#e2e2e2" stroke-width="1.7" fill="none"/></svg></div>
<div class="a" style="left:1502.5px;top:654px;width:2.5px;height:26px;background:#3d8ff0"></div>
<svg class="a" style="left:1516px;top:662px" width="7" height="10" viewBox="0 0 7 10"><path d="M1.5 1L5.5 5L1.5 9" stroke="#cfcfcf" stroke-width="1.1" fill="none"/></svg>
<div class="a" style="left:1527px;top:657px;width:20px;height:20px;background:#fff"></div>
<svg class="a" style="left:1527px;top:657px" width="20" height="20" viewBox="0 0 20 20"><path d="M2 10H18" stroke="#e08585" stroke-width="1" stroke-dasharray="1 1"/></svg>
<div class="a pt" style="left:1552px;top:662px">Rose</div>
<svg class="a" style="left:1698px;top:660px" width="12" height="14" viewBox="0 0 12 14"><path d="M3 6V4a3 3 0 0 1 6 0v2" stroke="#555" stroke-width="1.6" fill="none"/><rect x="1.5" y="6" width="9" height="7" rx="1" fill="#555"/></svg>
<div class="a cb" style="left:1481px;top:687px"><svg width="14" height="14" viewBox="0 0 14 14"><path d="M2.3 6.4L5.9 9.9L11.4 2.3" stroke="#e2e2e2" stroke-width="1.7" fill="none"/></svg></div>
<div class="a" style="left:1502.5px;top:681px;width:2.5px;height:26px;background:#e25866"></div>
<svg class="a" style="left:1516px;top:689px" width="7" height="10" viewBox="0 0 7 10"><path d="M1.5 1L5.5 5L1.5 9" stroke="#cfcfcf" stroke-width="1.1" fill="none"/></svg>
<div class="a" style="left:1527px;top:684px;width:20px;height:20px;background:#fff"></div>
<svg class="a" style="left:1527px;top:684px" width="20" height="20" viewBox="0 0 20 20"><circle cx="10" cy="10" r="1.6" fill="none" stroke="#3a9a3a" stroke-width="0.9"/><circle cx="16" cy="10" r="1.6" fill="none" stroke="#3a9a3a" stroke-width="0.9"/><rect x="2" y="9" width="2" height="2" fill="none" stroke="#9ac29a" stroke-width="0.6"/></svg>
<div class="a pt" style="left:1552px;top:689px">Leaves</div>
<svg class="a" style="left:1698px;top:687px" width="12" height="14" viewBox="0 0 12 14"><path d="M3 6V4a3 3 0 0 1 6 0" stroke="#555" stroke-width="1.6" fill="none"/><rect x="1.5" y="6" width="9" height="7" rx="1" fill="#555"/></svg>
<div class="a" style="left:1480px;top:953px;width:231px;height:1px;background:#3e3e3e"></div>
<svg class="a" style="left:1480px;top:961px" width="16" height="16" viewBox="0 0 16 16"><path d="M8 1V15M1 8H15" stroke="#d6d6d6" stroke-width="1.8"/></svg>
<svg class="a" style="left:1505px;top:960px" width="18" height="18" viewBox="0 0 18 18"><circle cx="7" cy="7" r="5.3" fill="#666" stroke="#d6d6d6" stroke-width="1.4"/><path d="M11 11L16 16" stroke="#d6d6d6" stroke-width="2" stroke-linecap="round"/></svg>
<svg class="a" style="left:1694px;top:961px" width="12" height="17" viewBox="0 0 12 17"><path d="M4 2.2V1H8V2.2" stroke="#d6d6d6" stroke-width="1" fill="none"/><rect x="0.3" y="2.2" width="11.4" height="2.2" rx="0.6" fill="#d6d6d6"/><path d="M1.2 5.3H10.8L9.8 16.2H2.2Z" fill="#d6d6d6"/></svg>
</div>
</body></html>
